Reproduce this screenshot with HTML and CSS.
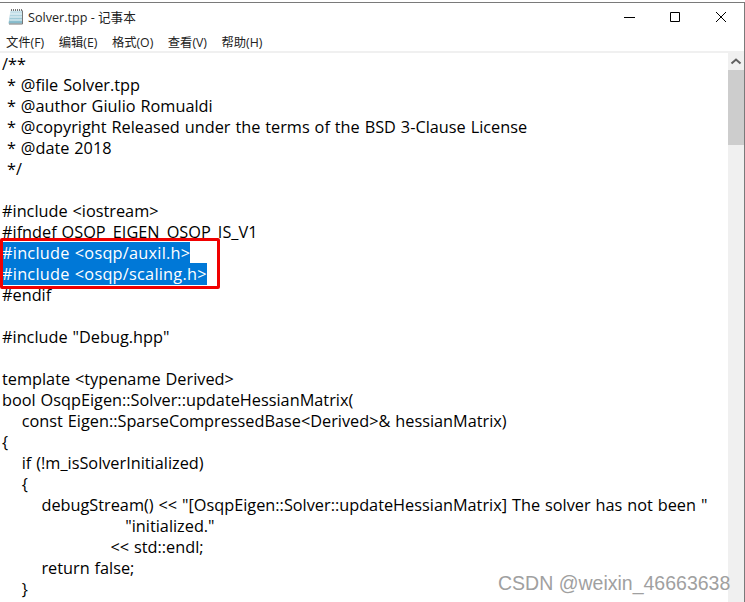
FILE: index.html
```html
<!DOCTYPE html>
<html lang="zh">
<head>
<meta charset="utf-8">
<title>Solver.tpp - 记事本</title>
<link rel="stylesheet" href="styles.css">
</head>
<body>
<div class="window">
  <header class="titlebar">
    <svg class="app-icon" width="16" height="16" viewBox="0 0 16 16">
      <defs><linearGradient id="pad" x1="0" y1="0" x2="0" y2="1"><stop offset="0" stop-color="#cfe6ee"/><stop offset="1" stop-color="#7fb7c8"/></linearGradient></defs>
      <path d="M2.500 1.500h12v13h-14z" fill="url(#pad)"/>
      <path d="M2 5h12M1.700 8h12.300M1.300 11h12.700" stroke="#eef7fa" stroke-width="1"/>
      <path d="M3.500 0v2M5.500 0v2M7.500 0v2M9.500 0v2M11.500 0v2M13.500 0v2" stroke="#777" stroke-width="1"/>
      <path d="M14.500 1.500v13.500H1" fill="none" stroke="#777"/>
    </svg>
    <span class="title">Solver.tpp - 记事本</span>
    <div class="controls">
      <svg class="ctl" width="46" height="27" viewBox="0 0 46 27"><path d="M18 14.500h11" stroke="#000"/></svg>
      <svg class="ctl" width="46" height="27" viewBox="0 0 46 27"><path d="M18.500 9.500h9v9h-9z" fill="none" stroke="#000"/></svg>
      <svg class="ctl" width="46" height="27" viewBox="0 0 46 27"><path d="M18 9l10 10M28 9l-10 10" stroke="#000" fill="none"/></svg>
    </div>
  </header>
  <nav class="menu">
    <span>文件(F)</span><span>编辑(E)</span><span>格式(O)</span><span>查看(V)</span><span>帮助(H)</span>
  </nav>
  <main class="client">
<pre class="editor">/**
 * @file Solver.tpp
 * @author Giulio Romualdi
 * @copyright Released under the terms of the BSD 3-Clause License
 * @date 2018
 */

#include &lt;iostream&gt;
#ifndef OSQP_EIGEN_OSQP_IS_V1
<span class="sel">#include &lt;osqp/auxil.h&gt;</span>
<span class="sel">#include &lt;osqp/scaling.h&gt;</span>
#endif

#include "Debug.hpp"

template &lt;typename Derived&gt;
bool OsqpEigen::Solver::updateHessianMatrix(
    const Eigen::SparseCompressedBase&lt;Derived&gt;&amp; hessianMatrix)
{
    if (!m_isSolverInitialized)
    {
        debugStream() &lt;&lt; "[OsqpEigen::Solver::updateHessianMatrix] The solver has not been "
                         "initialized."
                      &lt;&lt; std::endl;
        return false;
    }</pre>
    <div class="scrollbar">
      <svg class="arrow" width="16" height="17" viewBox="0 0 16 17"><path d="M3.500 10.500l4.500-4 4.500 4" fill="none" stroke="#606060" stroke-width="2"/></svg>
      <div class="thumb"></div>
    </div>
  </main>
  <div class="highlight"></div>
  <div class="watermark">CSDN @weixin_46663638</div>
</div>
</body>
</html>
```
FILE: styles.css
```css
html, body {
  margin: 0;
  padding: 0;
  background: #fff;
}
.window {
  position: relative;
  width: 745px;
  height: 600px;
  margin-top: 2px;
  overflow: hidden;
  box-sizing: border-box;
  border-top: 1px solid #7a7a7a;
  border-right: 1px solid #7a7a7a;
  font-family: "Open Sans", "Noto Sans CJK SC", sans-serif;
  color: #000;
  display: flex;
  flex-direction: column;
}
.titlebar {
  height: 29px;
  box-sizing: border-box;
  display: flex;
  align-items: center;
  padding: 0 0 2px 8px;
  flex: none;
}
.app-icon { margin-right: 4px; }
.title {
  font-size: 12.600px;
  color: #222;
}
.controls {
  margin-left: auto;
  display: flex;
}
.ctl { display: block; }
.menu {
  height: 19px;
  flex: none;
  display: flex;
  align-items: center;
  gap: 14.500px;
  padding-left: 6px;
  font-size: 12.300px;
  color: #222;
}
.client {
  flex: 1;
  min-height: 0;
  display: flex;
  border-top: 2px solid #f0f0f0;
}
.editor {
  flex: 1;
  margin: 0;
  padding: 1px 0 0 2px;
  overflow: hidden;
  font-family: "Open Sans", sans-serif;
  font-size: 16.300px;
  word-spacing: 0.700px;
  line-height: 21px;
  white-space: pre;
}
.sel {
  background: #0078d7;
  color: #fff;
  letter-spacing: 0.250px;
}
.scrollbar {
  flex: none;
  width: 16px;
  background: #f0f0f0;
}
.arrow { display: block; }
.thumb {
  height: 75px;
  background: #cdcdcd;
}
.highlight {
  position: absolute;
  left: 0;
  top: 235px;
  width: 220px;
  height: 51px;
  box-sizing: border-box;
  border: 3.500px solid #f00000;
  border-radius: 2px;
}
.watermark {
  position: absolute;
  left: 498px;
  top: 569px;
  font-family: "Liberation Sans", sans-serif;
  font-size: 19.500px;
  color: #a0a0a0;
}
```
